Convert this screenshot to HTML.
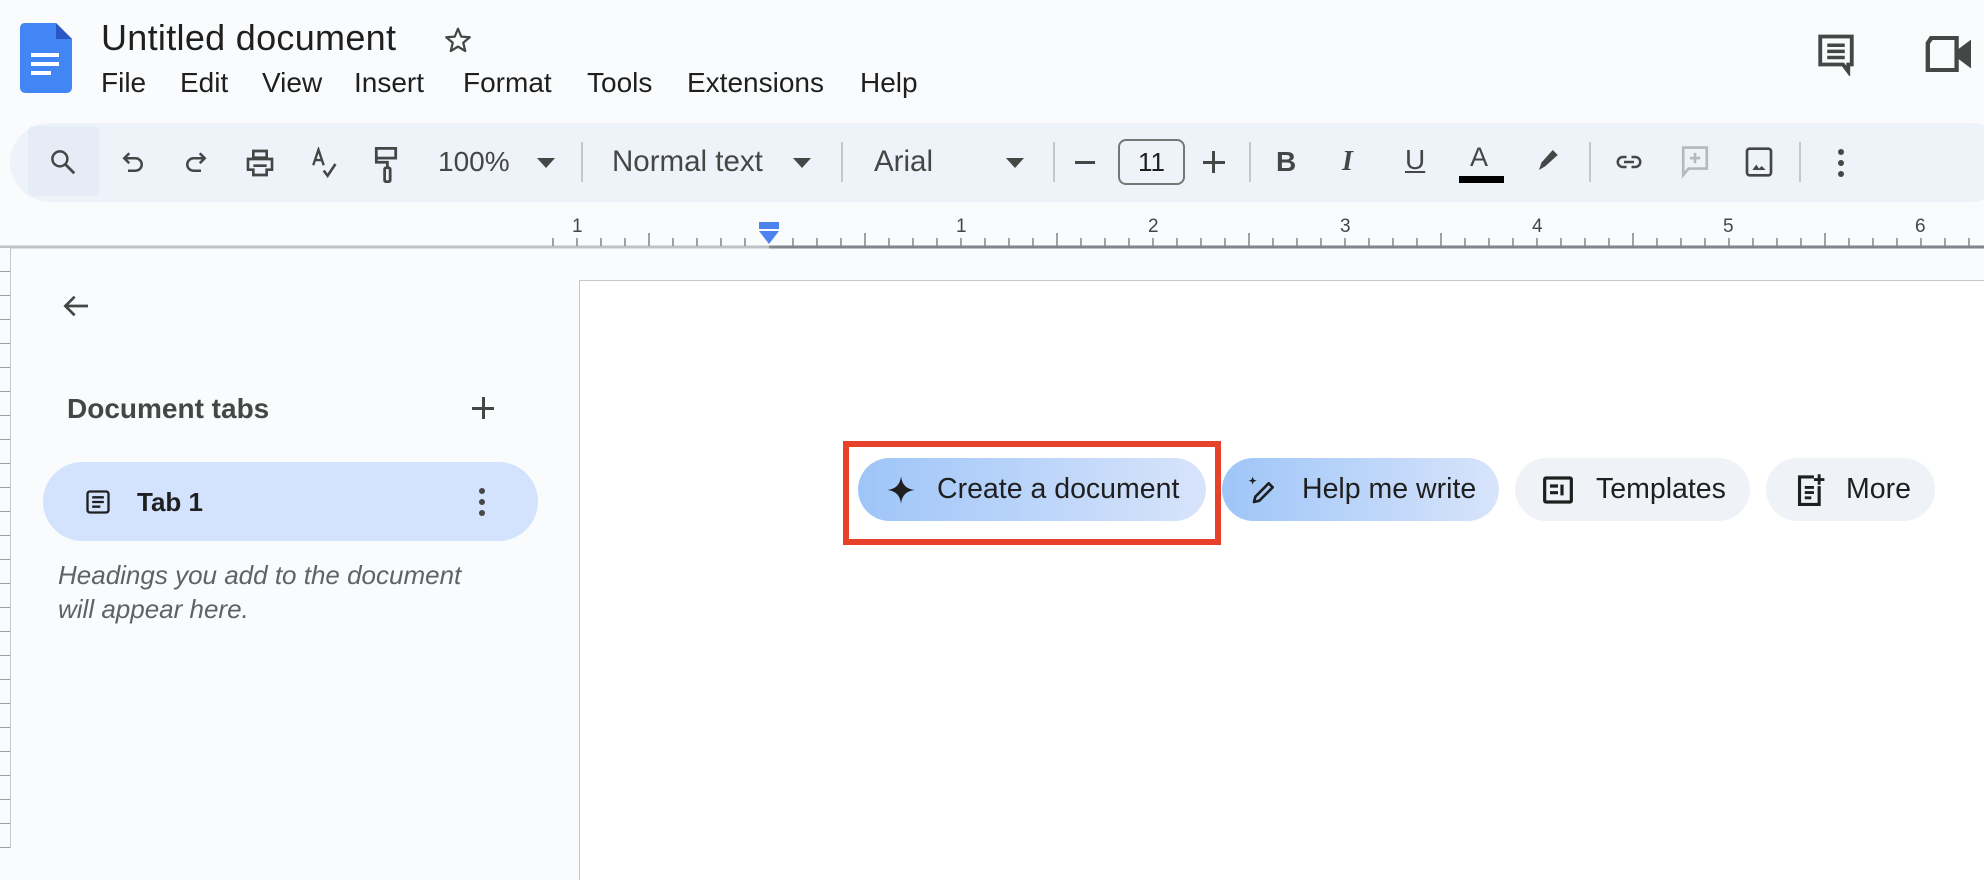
<!DOCTYPE html>
<html><head><meta charset="utf-8"><style>
*{margin:0;padding:0;box-sizing:border-box}
body{width:1984px;height:844px;overflow:hidden;background:#f9fbfd;font-family:"Liberation Sans",Arial,sans-serif;color:#1f1f1f;position:relative}
.a{position:absolute}
.menu{position:absolute;top:67px;font-size:28px;color:#1f1f1f}
.tb{position:absolute;left:10px;top:123px;width:2000px;height:79px;background:#eef2f9;border-radius:40px}
.ic{position:absolute;top:147px}
.sep{position:absolute;top:142px;width:2px;height:40px;background:#c7c7c7}
.tt{position:absolute;top:145px;font-size:29.5px;color:#444746}
.btn{position:absolute;top:458px;height:63px;border-radius:32px;font-size:28.5px;color:#1f1f1f;line-height:63px}
.rn{position:absolute;top:216px;font-size:19px;color:#444746}
</style></head><body>
<svg class="a" style="left:20px;top:23px" width="52" height="70" viewBox="0 0 52 70"><path d="M5 0H36L52 16V64Q52 70 46 70H6Q0 70 0 64V6Q0 0 5 0Z" fill="#4285f4"/><path d="M36 0V16H52Z" fill="#2a56c6"/><rect x="11" y="30" width="28" height="4" fill="#fff"/><rect x="11" y="39" width="28" height="4" fill="#fff"/><rect x="11" y="48" width="20" height="4" fill="#fff"/></svg>
<div class="a" style="left:101px;top:17px;font-size:36px;color:#1f1f1f;letter-spacing:0.3px">Untitled document</div>
<svg class="a" style="left:443px;top:25px" width="30" height="30" viewBox="0 0 24 24"><path d="M12 3l2.6 6.3 6.8.5-5.2 4.4 1.6 6.6L12 17.3 6.2 20.8l1.6-6.6L2.6 9.8l6.8-.5z" fill="none" stroke="#444746" stroke-width="1.8" stroke-linejoin="round"/></svg>
<div class="menu" style="left:101px">File</div>
<div class="menu" style="left:180px">Edit</div>
<div class="menu" style="left:262px">View</div>
<div class="menu" style="left:354px">Insert</div>
<div class="menu" style="left:463px">Format</div>
<div class="menu" style="left:587px">Tools</div>
<div class="menu" style="left:687px">Extensions</div>
<div class="menu" style="left:860px">Help</div>
<svg class="a" style="left:1815px;top:32px" width="42" height="44" viewBox="0 0 24 24"><path d="M3 2h18v16h-2v4l-3-4H3z" fill="none" stroke="#444746" stroke-width="2.2"/><path d="M7 7h10M7 10.5h10M7 14h10" stroke="#444746" stroke-width="2"/></svg>
<svg class="a" style="left:1922px;top:36px" width="62" height="36" viewBox="0 0 34 20"><path d="M5 1h14v18H3V4z" fill="none" stroke="#444746" stroke-width="2.4"/><path d="M19 8l8-6v16l-8-6" fill="#444746"/></svg>
<div class="tb"></div>
<div class="a" style="left:28px;top:126px;width:71px;height:70px;background:#e6ecf6;border-radius:6px"></div>
<svg class="ic" style="left:48px" width="30" height="30" viewBox="0 0 24 24"><circle cx="9.5" cy="9.5" r="6" fill="none" stroke="#444746" stroke-width="2"/><path d="M14 14l7 7" stroke="#444746" stroke-width="2.2"/></svg>
<svg class="ic" style="left:118px" width="30" height="30" viewBox="0 0 24 24"><path d="M9 5L5 9l4 4" fill="none" stroke="#444746" stroke-width="2"/><path d="M5 9h9a5 5 0 0 1 0 10H8" fill="none" stroke="#444746" stroke-width="2"/></svg>
<svg class="ic" style="left:181px" width="30" height="30" viewBox="0 0 24 24"><path d="M15 5l4 4-4 4" fill="none" stroke="#444746" stroke-width="2"/><path d="M19 9h-9a5 5 0 0 0 0 10h6" fill="none" stroke="#444746" stroke-width="2"/></svg>
<svg class="ic" style="left:244px" width="32" height="32" viewBox="0 0 24 24"><path d="M7 3h10v5H7z" fill="none" stroke="#444746" stroke-width="2"/><path d="M3 9h18v8h-4v4H7v-4H3z" fill="none" stroke="#444746" stroke-width="2"/><path d="M7 14h10" stroke="#444746" stroke-width="2"/></svg>
<svg class="ic" style="left:309px" width="32" height="34" viewBox="0 0 24 26"><path d="M3 14L7 2l4 12M4.5 10h5" fill="none" stroke="#444746" stroke-width="1.8"/><path d="M11 18l3 4 6-9" fill="none" stroke="#444746" stroke-width="2"/></svg>
<svg class="ic" style="left:371px" width="30" height="36" viewBox="0 0 20 26"><rect x="3" y="1" width="14" height="7" fill="none" stroke="#444746" stroke-width="2"/><path d="M3 8v3h8v4" fill="none" stroke="#444746" stroke-width="2"/><rect x="9" y="15" width="4" height="10" rx="1" fill="none" stroke="#444746" stroke-width="2"/></svg>
<div class="tt" style="left:438px;font-size:28px;top:146px">100%</div>
<svg class="ic" style="left:537px;top:158px" width="18" height="10"><path d="M0 0h18L9 10z" fill="#444746"/></svg>
<div class="sep" style="left:581px"></div>
<div class="tt" style="left:612px">Normal text</div>
<svg class="ic" style="left:793px;top:158px" width="18" height="10"><path d="M0 0h18L9 10z" fill="#444746"/></svg>
<div class="sep" style="left:841px"></div>
<div class="tt" style="left:874px">Arial</div>
<svg class="ic" style="left:1006px;top:158px" width="18" height="10"><path d="M0 0h18L9 10z" fill="#444746"/></svg>
<div class="sep" style="left:1053px"></div>
<div class="a" style="left:1075px;top:161px;width:20px;height:3px;background:#444746"></div>
<div class="a" style="left:1118px;top:139px;width:67px;height:46px;border:2px solid #747775;border-radius:8px;font-size:26px;text-align:center;line-height:42px;color:#1f1f1f">11</div>
<div class="a" style="left:1203px;top:161px;width:22px;height:3px;background:#444746"></div>
<div class="a" style="left:1212px;top:151px;width:3px;height:22px;background:#444746"></div>
<div class="sep" style="left:1249px"></div>
<div class="a" style="left:1276px;top:146px;font-size:28px;font-weight:bold;color:#444746">B</div>
<div class="a" style="left:1342px;top:146px;font-size:28px;font-style:italic;font-weight:bold;color:#444746;font-family:'Liberation Serif',serif">I</div>
<div class="a" style="left:1405px;top:144px;font-size:28px;text-decoration:underline;color:#444746">U</div>
<div class="a" style="left:1470px;top:142px;font-size:27px;color:#444746">A</div>
<div class="a" style="left:1459px;top:176px;width:45px;height:7px;background:#000"></div>
<svg class="ic" style="left:1534px;top:145px" width="30" height="30" viewBox="0 0 24 24"><path d="M4 20l2-6 9-10 4 4-10 9z" fill="#444746"/></svg>
<div class="sep" style="left:1589px"></div>
<svg class="ic" style="left:1613px" width="32" height="30" viewBox="0 0 24 24"><path d="M10 8H7a4 4 0 0 0 0 8h3M14 8h3a4 4 0 0 1 0 8h-3M8 12h8" fill="none" stroke="#444746" stroke-width="2"/></svg>
<svg class="ic" style="left:1679px;top:145px" width="32" height="34" viewBox="0 0 24 26"><path d="M3 2h18v16H7l-4 5z" fill="none" stroke="#b5b8bc" stroke-width="2"/><path d="M12 6v8M8 10h8" stroke="#b5b8bc" stroke-width="2"/></svg>
<svg class="ic" style="left:1744px;top:146px" width="30" height="32" viewBox="0 0 22 24"><rect x="2" y="2" width="18" height="20" rx="2" fill="none" stroke="#444746" stroke-width="2"/><path d="M6 18l3-4 2 3 2-2 3 3z" fill="#444746"/></svg>
<div class="sep" style="left:1799px"></div>
<svg class="ic" style="left:1835px" width="12" height="32"><circle cx="6" cy="5" r="3" fill="#444746"/><circle cx="6" cy="16" r="3" fill="#444746"/><circle cx="6" cy="27" r="3" fill="#444746"/></svg>
<svg class="a" style="left:0;top:210px" width="1984" height="40">
<line x1="0" y1="37" x2="1984" y2="37" stroke="#bfc1c4" stroke-width="3"/>
<line x1="769" y1="37" x2="1984" y2="37" stroke="#80868b" stroke-width="3"/>
<g stroke="#80868b" stroke-width="1.5">
<path d="M553 36v-8M577 36v-8M601 36v-8M625 36v-8M649 36v-13M673 36v-8M697 36v-8M721 36v-8M745 36v-8M793 36v-8M817 36v-8M841 36v-8M865 36v-13M889 36v-8M913 36v-8M937 36v-8M961 36v-8M985 36v-8M1009 36v-8M1033 36v-8M1057 36v-13M1081 36v-8M1105 36v-8M1129 36v-8M1153 36v-8M1177 36v-8M1201 36v-8M1225 36v-8M1249 36v-13M1273 36v-8M1297 36v-8M1321 36v-8M1345 36v-8M1369 36v-8M1393 36v-8M1417 36v-8M1441 36v-13M1465 36v-8M1489 36v-8M1513 36v-8M1537 36v-8M1561 36v-8M1585 36v-8M1609 36v-8M1633 36v-13M1657 36v-8M1681 36v-8M1705 36v-8M1729 36v-8M1753 36v-8M1777 36v-8M1801 36v-8M1825 36v-13M1849 36v-8M1873 36v-8M1897 36v-8M1921 36v-8M1945 36v-8M1969 36v-8"/>
</g>
<rect x="759" y="12" width="20" height="7" fill="#4d83ec"/><path d="M759 21h20l-10 13z" fill="#4d83ec"/>
</svg>
<div class="rn" style="left:572px">1</div><div class="rn" style="left:956px">1</div><div class="rn" style="left:1148px">2</div><div class="rn" style="left:1340px">3</div><div class="rn" style="left:1532px">4</div><div class="rn" style="left:1723px">5</div><div class="rn" style="left:1915px">6</div>
<div class="a" style="left:0;top:248px;width:11px;height:600px;border-right:1px solid #c4c7c5;background:repeating-linear-gradient(#f9fbfd 0 23px,#9aa0a6 23px 24px)"></div>
<svg class="a" style="left:60px;top:290px" width="32" height="32" viewBox="0 0 24 24"><path d="M21 12H4M11 5l-7 7 7 7" fill="none" stroke="#444746" stroke-width="2"/></svg>
<div class="a" style="left:67px;top:393px;font-size:28px;color:#444746;font-weight:bold">Document tabs</div>
<div class="a" style="left:472px;top:407px;width:22px;height:2.5px;background:#444746"></div>
<div class="a" style="left:482px;top:397px;width:2.5px;height:22px;background:#444746"></div>
<div class="a" style="left:43px;top:462px;width:495px;height:79px;background:#d3e3fd;border-radius:40px"></div>
<svg class="a" style="left:84px;top:488px" width="28" height="28" viewBox="0 0 24 24"><rect x="3" y="3" width="18" height="18" rx="2" fill="none" stroke="#1f1f1f" stroke-width="2"/><path d="M7 8h10M7 12h10M7 16h7" stroke="#1f1f1f" stroke-width="2"/></svg>
<div class="a" style="left:137px;top:487px;font-size:26px;font-weight:bold;color:#1f1f1f">Tab 1</div>
<svg class="a" style="left:476px;top:487px" width="12" height="30"><circle cx="6" cy="4" r="3" fill="#444746"/><circle cx="6" cy="15" r="3" fill="#444746"/><circle cx="6" cy="26" r="3" fill="#444746"/></svg>
<div class="a" style="left:58px;top:558px;font-size:26px;font-style:italic;color:#5f6368;line-height:34px">Headings you add to the document<br>will appear here.</div>
<div class="a" style="left:579px;top:280px;width:1420px;height:600px;background:#fff;border-left:1px solid #c7c7c7;border-top:1px solid #c7c7c7"></div>
<div class="a" style="left:843px;top:441px;width:378px;height:104px;border:6px solid #e8412a"></div>
<div class="btn" style="left:858px;width:348px;background:linear-gradient(90deg,#9ec5f8,#d8e4fb)"><svg class="a" style="left:28px;top:17px" width="30" height="30" viewBox="0 0 24 24"><path d="M12 1Q13 11 23 12Q13 13 12 23Q11 13 1 12Q11 11 12 1Z" fill="#1f1f1f"/></svg><span class="a" style="left:79px">Create a document</span></div>
<div class="btn" style="left:1222px;width:277px;background:linear-gradient(90deg,#9ec5f8,#d8e4fb)"><svg class="a" style="left:24px;top:16px" width="32" height="32" viewBox="0 0 24 24"><path d="M5 2l.8 2.2L8 5l-2.2.8L5 8l-.8-2.2L2 5l2.2-.8z" fill="#1f1f1f"/><path d="M6 21l1-4L17 7l3 3-10 10z" fill="none" stroke="#1f1f1f" stroke-width="2" stroke-linejoin="round"/></svg><span class="a" style="left:80px">Help me write</span></div>
<div class="btn" style="left:1515px;width:235px;background:#eff2f7"><svg class="a" style="left:27px;top:17px" width="32" height="30" viewBox="0 0 24 22"><rect x="2" y="2" width="20" height="18" rx="1" fill="none" stroke="#1f1f1f" stroke-width="2.4"/><path d="M6 8h6M6 13h6M15 7v8" stroke="#1f1f1f" stroke-width="2.4"/></svg><span class="a" style="left:81px">Templates</span></div>
<div class="btn" style="left:1766px;width:169px;background:#eff2f7"><svg class="a" style="left:29px;top:15px" width="30" height="34" viewBox="0 0 22 26"><path d="M14 3H3v21h15V10" fill="none" stroke="#1f1f1f" stroke-width="2.4"/><path d="M18 1v8M14 5h8M7 11h7M7 15h7M7 19h5" stroke="#1f1f1f" stroke-width="2.2"/></svg><span class="a" style="left:80px">More</span></div>
</body></html>
